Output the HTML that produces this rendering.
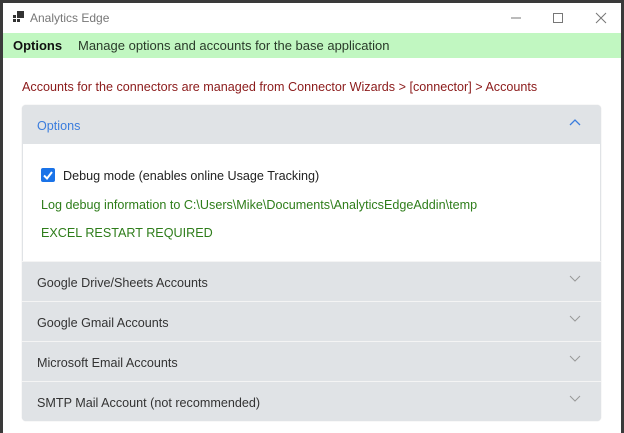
<!DOCTYPE html>
<html><head><style>
body{margin:0;width:624px;height:433px;background:#3a3a3a;font-family:"Liberation Sans",sans-serif;overflow:hidden}
.win{position:absolute;left:3px;top:3px;width:618px;height:430px;background:#fff}
.title{height:30px;position:relative;font-size:12px;color:#777}
.title span{position:absolute;left:27px;top:8px}
.bar{position:absolute;top:30px;left:0;width:618px;height:25px;background:#c1f7c1;font-size:13px;color:#2a3a2a}
.bar b{position:absolute;left:10px;top:5px;color:#111}
.bar span{position:absolute;left:75px;top:5px}
.red{position:absolute;left:19px;top:77px;font-size:12.6px;color:#8b1a1a}
.acc{position:absolute;left:19px;top:102px;width:579px;border-radius:4px;overflow:hidden;background:#e0e3e6;box-shadow:0 0 1px #ccc}
.h{height:39px;border-top:1px solid #f4f4f4;position:relative;font-size:12.6px;color:#333}
.h span{position:absolute;left:15px;top:14px}
.h svg{position:absolute;right:20px;top:13px}
.c{background:#fff;height:117px;position:relative;font-size:12.6px;margin:0 1px}
.c div{position:absolute;left:18px}
.g{color:#2e7d1a}
</style></head><body>
<div class="win">
<div class="title">
<svg style="position:absolute;left:10px;top:8px" width="12" height="11"><rect x="4" y="0" width="7" height="7" fill="#333"/><rect x="0" y="4" width="3" height="3" fill="#333"/><rect x="0" y="8" width="3" height="3" fill="#333"/><rect x="4" y="8" width="3" height="3" fill="#333"/></svg>
<span>Analytics Edge</span>
<svg style="position:absolute;left:508px;top:8px" width="100" height="14"><line x1="0" y1="7" x2="10" y2="7" stroke="#777"/><rect x="42.5" y="2.5" width="9" height="9" fill="none" stroke="#777"/><path d="M85 2L95 12M95 2L85 12" stroke="#777"/></svg>
</div>
<div class="bar"><b>Options</b><span>Manage options and accounts for the base application</span></div>
<div class="red">Accounts for the connectors are managed from Connector Wizards &gt; [connector] &gt; Accounts</div>
<div class="acc">
<div class="h" style="border-top:none"><span style="color:#3b7ddd">Options</span><svg width="12" height="8"><path d="M1 7L6 2L11 7" fill="none" stroke="#3b7ddd" stroke-width="1.3"/></svg></div>
<div class="c">
<svg style="position:absolute;left:18px;top:24px" width="14" height="14"><rect width="14" height="14" rx="2" fill="#1a73e8"/><path d="M3 7.5L6 10.5L11 4" fill="none" stroke="#fff" stroke-width="2"/></svg>
<div style="left:40px;top:25px;color:#222">Debug mode (enables online Usage Tracking)</div>
<div class="g" style="top:54px">Log debug information to C:\Users\Mike\Documents\AnalyticsEdgeAddin\temp</div>
<div class="g" style="top:82px">EXCEL RESTART REQUIRED</div>
</div>
<div class="h"><span>Google Drive/Sheets Accounts</span><svg width="12" height="8"><path d="M1 1L6 6L11 1" fill="none" stroke="#999" stroke-width="1"/></svg></div>
<div class="h"><span>Google Gmail Accounts</span><svg width="12" height="8"><path d="M1 1L6 6L11 1" fill="none" stroke="#999" stroke-width="1"/></svg></div>
<div class="h"><span>Microsoft Email Accounts</span><svg width="12" height="8"><path d="M1 1L6 6L11 1" fill="none" stroke="#999" stroke-width="1"/></svg></div>
<div class="h"><span>SMTP Mail Account (not recommended)</span><svg width="12" height="8"><path d="M1 1L6 6L11 1" fill="none" stroke="#999" stroke-width="1"/></svg></div>
</div>
</div>
</body></html>
